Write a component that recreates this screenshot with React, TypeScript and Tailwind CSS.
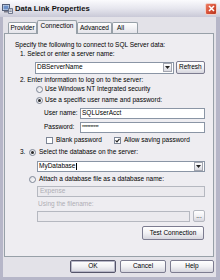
import React from "react";

function Radio({ checked }: { checked?: boolean }) {
  return (
    <div className="w-[7px] h-[7px] rounded-full border border-[#7d8696] bg-gradient-to-br from-[#dcdce2] to-white flex items-center justify-center shrink-0">
      {checked && <div className="w-[3px] h-[3px] rounded-full bg-[#2a2a2a]" />}
    </div>
  );
}

function Check({ checked }: { checked?: boolean }) {
  return (
    <div className="w-[7px] h-[7px] border border-[#7d8696] bg-white flex items-center justify-center shrink-0">
      {checked && (
        <svg width="5" height="5" viewBox="0 0 5 5">
          <path d="M0.5 2.3 L2 3.8 L4.5 0.8" stroke="#222" strokeWidth="1.2" fill="none" />
        </svg>
      )}
    </div>
  );
}

function DropBtn() {
  return (
    <div className="w-[9px] h-[9px] mr-[1px] border border-[#a3a6b0] bg-gradient-to-b from-white to-[#d9d9e0] flex items-center justify-center shrink-0">
      <svg width="5" height="3" viewBox="0 0 5 3">
        <path d="M0 0 H5 L2.5 3 Z" fill="#222" />
      </svg>
    </div>
  );
}

function Btn({ children, className = "", def }: { children: React.ReactNode; className?: string; def?: boolean }) {
  return (
    <div
      className={`flex items-center justify-center rounded-[2px] border ${
        def ? "border-[#55556a] shadow-[inset_0_0_0_1px_#b8b8c8]" : "border-[#7c7c90]"
      } bg-gradient-to-b from-white via-[#f1f1f4] to-[#d6d6de] text-black ${className}`}
    >
      {children}
    </div>
  );
}

export default function App() {
  return (
    <div className="w-[220px] h-[280px] bg-[#b6b6c8] flex flex-col overflow-hidden font-['Liberation_Sans',Arial,sans-serif] text-[6.5px] leading-none text-black">
      {/* Title bar */}
      <div className="h-[17px] shrink-0 flex items-center bg-gradient-to-b from-[#fbfbfd] via-[#e6e6ee] to-[#c9c9d7] pl-[2px] pr-[3px]">
        <svg width="11" height="10" viewBox="0 0 11 10" className="shrink-0">
          <rect x="0.5" y="0.5" width="7" height="6" fill="#dfe6f0" stroke="#55607a" />
          <rect x="1.5" y="1.5" width="5" height="4" fill="#6b8fc8" />
          <rect x="2" y="7" width="4" height="1.5" fill="#7a7a88" />
          <path d="M6.5 4.5 h4 v5 h-4 z" fill="#e8e8ec" stroke="#55607a" strokeWidth="0.8" />
          <path d="M7.3 6 h2.4 M7.3 7.5 h2.4" stroke="#3a4a6a" strokeWidth="0.6" />
        </svg>
        <div className="ml-[2px] font-bold text-[7.7px] text-[#111]">Data Link Properties</div>
        <div className="ml-auto w-[12px] h-[12px] rounded-[2px] border border-[#f3d0c8] bg-gradient-to-br from-[#ec7a62] via-[#d8533a] to-[#b8341c] flex items-center justify-center">
          <svg width="7" height="7" viewBox="0 0 7 7">
            <path d="M1 1 L6 6 M6 1 L1 6" stroke="white" strokeWidth="1.5" />
          </svg>
        </div>
      </div>

      {/* Body */}
      <div className="flex-1 ml-[3px] mr-[4px] mb-[3px] bg-[#e3e2e8] flex flex-col pl-[1px] pr-[2px]">
        {/* Tabs */}
        <div className="h-[16px] flex items-end pl-[4px] relative z-10">
          <div className="w-[29px] h-[11px] border border-b-0 border-[#97a0a8] rounded-t-[2px] bg-gradient-to-b from-white to-[#e4e4ea] flex items-center justify-center">Provider</div>
          <div className="w-[40px] h-[14px] border border-b-0 border-[#97a0a8] rounded-t-[2px] bg-[#eeedf1] flex items-center justify-center mb-[-1px] pb-[2px]">Connection</div>
          <div className="w-[35px] h-[11px] border border-b-0 border-[#97a0a8] rounded-t-[2px] bg-gradient-to-b from-white to-[#e4e4ea] flex items-center justify-center">Advanced</div>
          <div className="w-[26px] h-[11px] border border-b-0 border-[#97a0a8] rounded-t-[2px] bg-gradient-to-b from-white to-[#e4e4ea] flex items-center pl-[4px]">All</div>
        </div>

        {/* Panel */}
        <div className="h-[224px] border border-[#97a0a8] bg-[#eeedf1] flex flex-col pl-[10px] pr-[8px]">
          <div className="h-[8px] mt-[7px] flex items-center">Specify the following to connect to SQL Server data:</div>
          <div className="h-[8px] mt-[1px] flex items-center pl-[5px]">1. Select or enter a server name:</div>
          <div className="h-[13px] mt-[3px] flex items-center pl-[20px]">
            <div className="w-[142px] h-[12px] border border-[#8a95a5] bg-white flex items-center">
              <span className="pl-[1px]">DBServerName</span>
              <div className="ml-auto"><DropBtn /></div>
            </div>
            <Btn className="ml-[2px] w-[30px] h-[13px]">Refresh</Btn>
          </div>
          <div className="h-[8px] mt-[2px] flex items-center pl-[5px]">2. Enter information to log on to the server:</div>
          <div className="h-[8px] mt-[1px] flex items-center pl-[21px] gap-[2px]">
            <Radio />
            <span>Use Windows NT Integrated security</span>
          </div>
          <div className="h-[8px] mt-[3px] flex items-center pl-[21px] gap-[2px]">
            <Radio checked />
            <span>Use a specific user name and password:</span>
          </div>
          <div className="h-[11px] mt-[4px] flex items-center pl-[29px]">
            <span className="w-[36px]">User name:</span>
            <div className="w-[125px] h-[11px] border border-[#8a95a5] bg-white flex items-center pl-[1px]">SQLUserAcct</div>
          </div>
          <div className="h-[11px] mt-[3px] flex items-center pl-[29px]">
            <span className="w-[36px]">Password:</span>
            <div className="w-[125px] h-[11px] border border-[#8a95a5] bg-white flex items-center pl-[1px] text-[5px] tracking-[-0.3px]">**********</div>
          </div>
          <div className="h-[8px] mt-[3px] flex items-center pl-[31px]">
            <Check />
            <span className="ml-[3px] w-[58px]">Blank password</span>
            <Check checked />
            <span className="ml-[3px]">Allow saving password</span>
          </div>
          <div className="h-[8px] mt-[4px] flex items-center pl-[5px]">
            <span className="w-[9px]">3.</span>
            <Radio checked />
            <span className="ml-[3px]">Select the database on the server:</span>
          </div>
          <div className="h-[11px] mt-[5px] flex items-center pl-[22px]">
            <div className="w-[168px] h-[11px] border border-[#8a95a5] bg-white flex items-center">
              <span className="pl-[1px]">MyDatabase</span>
              <span className="w-[1px] h-[7px] bg-black ml-[0.5px]" />
              <div className="ml-auto"><DropBtn /></div>
            </div>
          </div>
          <div className="h-[8px] mt-[3px] flex items-center pl-[14px]">
            <Radio />
            <span className="ml-[3px]">Attach a database file as a database name:</span>
          </div>
          <div className="h-[11px] mt-[3px] flex items-center pl-[22px]">
            <div className="w-[168px] h-[11px] border border-[#b5b8c0] bg-[#ebeaee] flex items-center pl-[2px] text-[#aeaeb4]">Expense</div>
          </div>
          <div className="h-[8px] mt-[3px] flex items-center pl-[23px] text-[#aeaeb4]">Using the filename:</div>
          <div className="h-[12px] mt-[2px] flex items-center pl-[22px]">
            <div className="w-[154px] h-[11px] border border-[#b5b8c0] bg-[#ebeaee]" />
            <Btn className="ml-[3px] w-[12px] h-[12px] text-[#aeaeb4] border-[#b5b8c0]">...</Btn>
          </div>
          <div className="h-[14px] mt-[4px] flex items-center justify-end pr-[1px]">
            <Btn className="w-[62px] h-[14px]">Test Connection</Btn>
          </div>
        </div>

        {/* Dialog buttons */}
        <div className="h-[13px] mt-[3px] flex items-center justify-end gap-[4px]">
          <Btn def className="w-[46px] h-[13px]">OK</Btn>
          <Btn className="w-[46px] h-[13px]">Cancel</Btn>
          <Btn className="w-[44px] h-[13px]">Help</Btn>
        </div>
      </div>
    </div>
  );
}
